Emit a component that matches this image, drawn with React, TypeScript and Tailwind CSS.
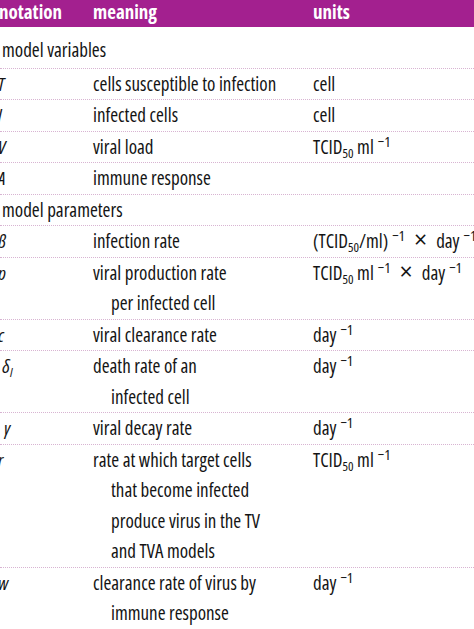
import React from "react";

function Sup({ children }: { children: React.ReactNode }) {
  return <span className="ml-[4px] text-[15px] align-[7px] leading-none">{children}</span>;
}
function Sub({ children }: { children: React.ReactNode }) {
  return <span className="text-[13px] align-[-4px] leading-none">{children}</span>;
}

type Row = {
  sym: React.ReactNode;
  lines: string[];
  unit?: React.ReactNode;
};

const tcid = (
  <>
    TCID<Sub>50</Sub>
  </>
);

const dayInv = (
  <>
    day<Sup>−1</Sup>
  </>
);

const times = <span className="mx-[9px] text-[23px] font-stretch-normal leading-none">×</span>;

const variables: Row[] = [
  { sym: <i>T</i>, lines: ["cells susceptible to infection"], unit: "cell" },
  { sym: <i>I</i>, lines: ["infected cells"], unit: "cell" },
  {
    sym: <i>V</i>,
    lines: ["viral load"],
    unit: (
      <>
        {tcid} ml<Sup>−1</Sup>
      </>
    ),
  },
  { sym: <i>A</i>, lines: ["immune response"] },
];

const params: Row[] = [
  {
    sym: <i>β</i>,
    lines: ["infection rate"],
    unit: (
      <>
        ({tcid}/ml)<Sup>−1</Sup>
        {times}
        {dayInv}
      </>
    ),
  },
  {
    sym: <i>p</i>,
    lines: ["viral production rate", "per infected cell"],
    unit: (
      <>
        {tcid} ml<Sup>−1</Sup>
        {times}
        {dayInv}
      </>
    ),
  },
  { sym: <i>c</i>, lines: ["viral clearance rate"], unit: dayInv },
  {
    sym: (
      <span className="pl-[4px]">
        <i>δ</i>
        <Sub>
          <i>I</i>
        </Sub>
      </span>
    ),
    lines: ["death rate of an", "infected cell"],
    unit: dayInv,
  },
  { sym: <i className="pl-[6px]">γ</i>, lines: ["viral decay rate"], unit: dayInv },
  {
    sym: <i>r</i>,
    lines: ["rate at which target cells", "that become infected", "produce virus in the TV", "and TVA models"],
    unit: (
      <>
        {tcid} ml<Sup>−1</Sup>
      </>
    ),
  },
  {
    sym: <i>w</i>,
    lines: ["clearance rate of virus by", "immune response"],
    unit: dayInv,
  },
];

function DataRow({ row }: { row: Row }) {
  return (
    <div className="grid grid-cols-[93px_220px_1fr] border-b border-dotted border-[#d8b4d2] leading-[30.5px]">
      <div className="-ml-[2px] whitespace-nowrap">{row.sym}</div>
      <div className="flex flex-col whitespace-nowrap">
        {row.lines.map((l, i) => (
          <div key={i} className={i > 0 ? "pl-[18px]" : ""}>
            {l}
          </div>
        ))}
      </div>
      <div className="whitespace-nowrap">{row.unit}</div>
    </div>
  );
}

function Section({ title, first }: { title: string; first?: boolean }) {
  return (
    <div
      className={`border-b border-dotted border-[#d8b4d2] leading-[30.5px] pl-[2px] ${first ? "pt-[8px] pb-[2px]" : ""}`}
    >
      {title}
    </div>
  );
}

export default function App() {
  return (
    <div className="w-[474px] h-[629px] overflow-hidden bg-white text-[#141414] text-[19px] font-['Open_Sans',sans-serif] font-stretch-condensed">
      <div className="grid grid-cols-[93px_220px_1fr] h-[27px] bg-[#a3208f] text-white font-bold leading-[24px]">
        <div className="-ml-[1px]">notation</div>
        <div>meaning</div>
        <div>units</div>
      </div>
      <Section title="model variables" first />
      {variables.map((r, i) => (
        <DataRow key={i} row={r} />
      ))}
      <Section title="model parameters" />
      {params.map((r, i) => (
        <DataRow key={i} row={r} />
      ))}
    </div>
  );
}
